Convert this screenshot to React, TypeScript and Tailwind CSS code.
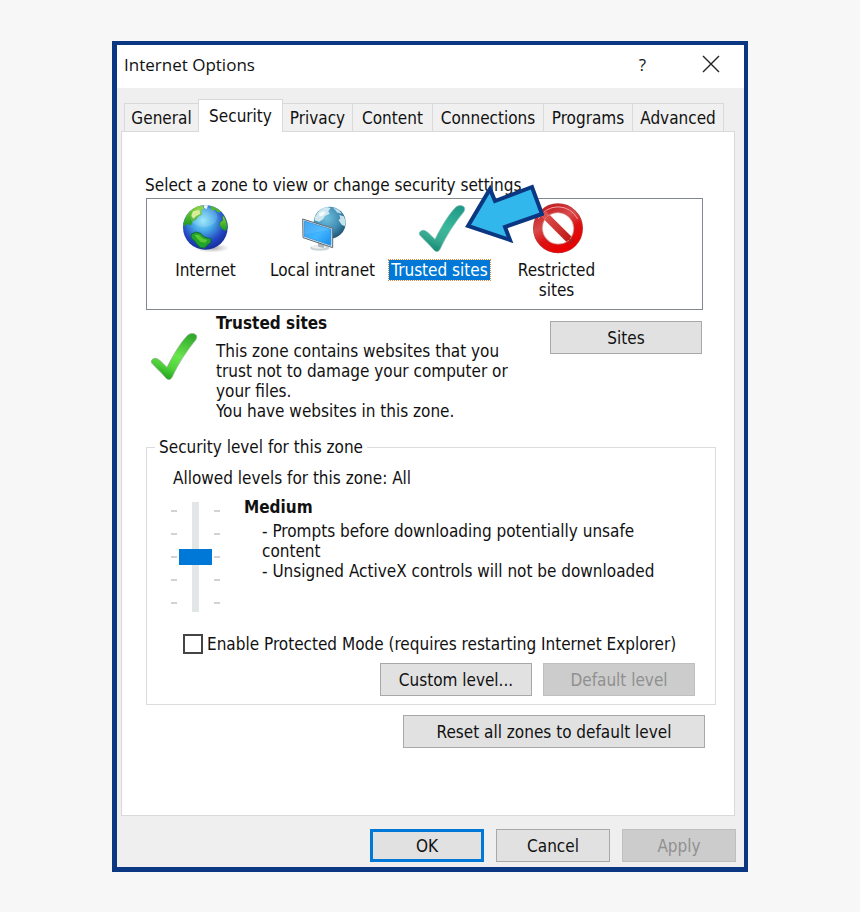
import type { ReactNode } from "react";
import { clsx } from "clsx";

// Tab widths include the shared border between neighbours.
const tabs = [
  { name: "General", width: "w-[75px]" },
  { name: "Security", width: "w-[85px]" },
  { name: "Privacy", width: "w-[71px]" },
  { name: "Content", width: "w-[81px]" },
  { name: "Connections", width: "w-[112px]" },
  { name: "Programs", width: "w-[90px]" },
  { name: "Advanced", width: "w-[92px]" },
];

function GlobeIcon() {
  return (
    <svg viewBox="0 0 144 144" className="size-12 overflow-visible" aria-hidden="true">
      <defs>
        <radialGradient id="sea" cx="0.45" cy="0.35" r="0.68">
          <stop offset="0" stopColor="#8fe6fb" />
          <stop offset="0.35" stopColor="#47a9e6" />
          <stop offset="0.72" stopColor="#2346c2" />
          <stop offset="1" stopColor="#142a94" />
        </radialGradient>
        <radialGradient id="globeShadow">
          <stop offset="0" stopColor="#777" stopOpacity="0.7" />
          <stop offset="1" stopColor="#999" stopOpacity="0" />
        </radialGradient>
        <linearGradient id="land" x1="0" y1="0" x2="0" y2="1">
          <stop offset="0" stopColor="#8fd63a" />
          <stop offset="1" stopColor="#159627" />
        </linearGradient>
      </defs>
      <ellipse cx="90" cy="132" rx="52" ry="14" fill="url(#globeShadow)" />
      <circle cx="70" cy="70" r="67" fill="url(#sea)" />
      <path d="M6 50 Q16 22 42 9 L62 4 L65 15 L57 21 L61 31 L49 38 L41 48 L32 52 L27 64 L16 60 L7 68 Q2 60 6 50Z" fill="url(#land)" />
      <path d="M33 22 L52 17 L55 29 L43 36 L34 44 L28 35Z" fill="#d3e98a" />
      <path d="M65 4 L78 4 L74 15 L67 12Z" fill="#f3fbf6" />
      <path d="M84 6 Q103 9 119 24 L107 25 L101 17 L91 20Z" fill="#52b82b" />
      <path d="M121 34 L128 40 Q137 55 136 72 L130 81 L120 75 L112 65 L114 53 L122 50Z" fill="url(#land)" stroke="#286a62" strokeWidth="2" />
      <path d="M27 91 L41 84 L56 88 L67 99 L87 105 L86 116 L75 124 L68 132 L55 131 L45 121 L37 110 L28 103Z" fill="#20a42c" stroke="#16693c" strokeWidth="3" />
      <path d="M37 92 L50 92 L61 103 L76 108 L70 116 L56 114 L46 104Z" fill="#5ac832" />
      <ellipse cx="66" cy="39" rx="40" ry="30" fill="#fff" opacity="0.14" />
    </svg>
  );
}

function IntranetIcon() {
  return (
    <svg viewBox="0 0 144 144" className="size-12 overflow-visible" aria-hidden="true">
      <defs>
        <radialGradient id="intranetSea" cx="0.4" cy="0.35" r="0.7">
          <stop offset="0" stopColor="#71c1dd" />
          <stop offset="0.6" stopColor="#418cb4" />
          <stop offset="1" stopColor="#1d526f" />
        </radialGradient>
        <linearGradient id="screen" x1="0" y1="0" x2="1" y2="1">
          <stop offset="0" stopColor="#2e9bef" />
          <stop offset="0.55" stopColor="#41b5ff" />
          <stop offset="1" stopColor="#178bea" />
        </linearGradient>
      </defs>
      <circle cx="92" cy="56" r="48" fill="url(#intranetSea)" />
      <path d="M48 39 Q59 16 82 9 L95 12 L88 22 L92 29 L78 36 L72 46 L61 53 L46 49Z" fill="#cfe8ef" />
      <path d="M60 28 L74 22 L80 27 L70 36 L61 37Z" fill="#f5fbfc" />
      <path d="M101 10 L120 18 L128 29 L115 26 L109 19Z" fill="#b9dce7" />
      <path d="M121 33 L134 37 Q143 54 137 67 L128 62 L119 49 L124 43Z" fill="#c4e5ed" />
      <ellipse cx="62" cy="132" rx="29" ry="8" fill="#cbd1d4" />
      <ellipse cx="60" cy="129" rx="22" ry="5" fill="#edf0f1" />
      <path d="M55 111 L77 120 L74 132 L58 128Z" fill="#afb7bb" />
      <path d="M11 45 L101 73 L101 131 L12 101Z" fill="#dde4e8" stroke="#5d6d76" strokeWidth="3" />
      <path d="M16 51 L96 76 L95 124 L16 97Z" fill="url(#screen)" stroke="#1783d6" strokeWidth="2" />
      <path d="M16 51 L96 76 L16 92Z" fill="#fff" opacity="0.1" />
    </svg>
  );
}

function CheckIcon({ tone }: { tone: "teal" | "green" }) {
  const teal = tone === "teal";
  const id = `check-${tone}`;
  return (
    <svg
      viewBox={teal ? "-9 -3 144 144" : "-3 0 144 144"}
      className="size-12 shrink-0 overflow-visible"
      aria-hidden="true"
    >
      <defs>
        <linearGradient id={id} x1="0.8" y1="0" x2="0.4" y2="1">
          <stop offset="0" stopColor={teal ? "#219987" : "#31a82b"} />
          <stop offset="0.5" stopColor={teal ? "#3bb89c" : "#68e64c"} />
          <stop offset="0.78" stopColor={teal ? "#37aa91" : "#50d13b"} />
          <stop offset="1" stopColor={teal ? "#178a75" : "#24a51e"} />
        </linearGradient>
      </defs>
      <path
        d="M2 90 C-2 82 6 75 15 76 C25 78 35 91 48 103 C66 68 86 32 110 7 C118 0 130 0 136 7 C139 13 136 19 131 25 C106 55 82 92 64 131 C59 141 51 142 45 135 C31 118 14 104 2 90Z"
        fill={`url(#${id})`}
        stroke={teal ? "#85bcb2" : "#92ac8e"}
        strokeWidth="2"
      />
    </svg>
  );
}

function RestrictedIcon() {
  return (
    <svg viewBox="0 0 144 144" className="size-12 overflow-visible" aria-hidden="true">
      <defs>
        <linearGradient id="ban" x1="0.2" y1="0" x2="0.7" y2="1">
          <stop offset="0" stopColor="#c52025" />
          <stop offset="0.35" stopColor="#d94a4b" />
          <stop offset="0.65" stopColor="#dc1111" />
          <stop offset="1" stopColor="#ea0000" />
        </linearGradient>
        <linearGradient id="banBar" x1="0" y1="0" x2="1" y2="1">
          <stop offset="0" stopColor="#dc5552" />
          <stop offset="1" stopColor="#bd1212" />
        </linearGradient>
      </defs>
      <circle cx="75" cy="73" r="61" fill="none" stroke="#b73d3d" strokeWidth="28" />
      <circle cx="75" cy="73" r="61" fill="none" stroke="url(#ban)" strokeWidth="24" />
      <path d="M32 30 L118 116" stroke="url(#banBar)" strokeWidth="22" />
      <path d="M42 37 A49 49 0 0 1 111 106 M108 109 A49 49 0 0 1 39 40" fill="none" stroke="#e99b97" strokeWidth="2" />
      <path d="M16 45 A66 66 0 0 1 134 45" fill="none" stroke="#efa19d" strokeWidth="3" />
    </svg>
  );
}

function PushButton({
  children,
  className,
  disabled,
  primary,
}: {
  children: ReactNode;
  className: string;
  disabled?: boolean;
  primary?: boolean;
}) {
  return (
    <button
      type="button"
      disabled={disabled}
      className={clsx(
        "shrink-0",
        className,
        disabled
          ? "border border-[#bfbfbf] bg-[#cccccc] text-[#909090]"
          : primary
            ? "border-[3px] border-[#0078d7] bg-[#e1e1e1]"
            : "border border-[#a8a8a8] bg-[#e1e1e1]",
      )}
    >
      {children}
    </button>
  );
}

function Zone({ label, icon, selected }: { label: string; icon: ReactNode; selected?: boolean }) {
  return (
    <button type="button" aria-pressed={!!selected} className="flex w-[117px] flex-col items-center">
      {icon}
      <span
        className={clsx(
          "mt-2 px-0.5",
          label === "Restricted sites" && "w-24",
          selected && "bg-[#0078d7] text-white outline-1 outline-dotted outline-[#e08a3c]",
        )}
      >
        {label}
      </span>
    </button>
  );
}

function Ticks() {
  return (
    <div className="flex h-[94px] flex-col justify-between" aria-hidden="true">
      {[0, 1, 2, 3, 4].map((tick) => (
        <span key={tick} className="h-0.5 w-1.5 bg-[#d2d2d2]" />
      ))}
    </div>
  );
}

export default function App() {
  return (
    <div className="min-h-screen bg-[#f7f7f7] px-28 py-[41px] font-['DejaVu_Sans_Condensed','DejaVu_Sans',sans-serif] text-[17px] leading-5 text-[#111]">
      <main className="border-4 border-b-[5px] border-l-[5px] border-[#0b3782] bg-[#efefef]">
        <header className="flex h-[43px] items-center bg-white pr-6 pl-[7px] font-['Open_Sans','Noto_Sans',sans-serif] leading-5">
          <h1 className="flex-1 pb-1">Internet Options</h1>
          <button type="button" aria-label="Help" className="mr-14 pb-1">
            ?
          </button>
          <button type="button" aria-label="Close" className="pb-1.5">
            <svg viewBox="0 0 18 18" className="size-[18px]" fill="none" stroke="#222" strokeWidth="1.4">
              <path d="M1 1 L17 17 M17 1 L1 17" />
            </svg>
          </button>
        </header>

        <div className="pt-[11px] pr-[9px] pl-1">
          <div role="tablist" className="flex items-end pl-[3px]">
            {tabs.map((tab) => {
              const active = tab.name === "Security";
              return (
                <button
                  key={tab.name}
                  type="button"
                  role="tab"
                  aria-selected={active}
                  className={clsx(
                    "-mr-px shrink-0 border border-b-0 border-[#d9d9d9] whitespace-nowrap",
                    tab.width,
                    active ? "relative -mb-px h-[33px] bg-white" : "h-7 bg-[#f0f0f0]",
                  )}
                >
                  {tab.name}
                </button>
              );
            })}
          </div>

          <section className="border border-[#d9d9d9] bg-white pt-[43px] pr-[18px] pb-[67px] pl-[17px]">
            <p className="pl-1.5">Select a zone to view or change security settings.</p>

            <div className="relative mt-[3px] mr-[13px] ml-[7px] flex h-28 items-start border border-[#828790] pt-[5px]">
              <Zone label="Internet" icon={<GlobeIcon />} />
              <Zone label="Local intranet" icon={<IntranetIcon />} />
              <Zone label="Trusted sites" icon={<CheckIcon tone="teal" />} selected />
              <Zone label="Restricted sites" icon={<RestrictedIcon />} />
              {/* Callout arrow pointing at the selected zone */}
              <svg
                viewBox="0 0 80 62"
                className="absolute -top-[17px] left-[317px] h-[62px] w-20"
                aria-hidden="true"
              >
                <path
                  d="M4 44 L26 7 L31 19 L68 5 L78 32 L41 45 L46 58Z"
                  fill="#31b7eb"
                  stroke="#0b3782"
                  strokeWidth="4"
                />
              </svg>
            </div>

            <div className="mt-[3px] flex items-start pr-3.5 pl-[11px]">
              <div className="pt-5">
                <CheckIcon tone="green" />
              </div>
              <div className="ml-[18px] flex-1">
                <h2 className="font-bold">Trusted sites</h2>
                <p className="mt-2 max-w-[300px]">
                  This zone contains websites that you trust not to damage your computer or your files.
                </p>
                <p>You have websites in this zone.</p>
              </div>
              <PushButton className="mt-2 h-[33px] w-[152px]">Sites</PushButton>
            </div>

            <fieldset className="mt-4 ml-[7px] border border-[#dcdcdc] pr-5 pb-2 pl-6">
              <legend className="-ml-4 px-1">Security level for this zone</legend>
              <p className="mt-[11px] ml-0.5">Allowed levels for this zone: All</p>

              <div className="mt-3.5 flex items-start">
                <div className="flex items-center gap-0.5">
                  <Ticks />
                  <input
                    type="range"
                    min={0}
                    max={4}
                    defaultValue={2}
                    aria-label="Security level"
                    className="h-[110px] w-[33px] appearance-none bg-transparent bg-[linear-gradient(#e3e6e6,#e3e6e6)] bg-[length:7px_110px] bg-center bg-no-repeat [writing-mode:vertical-lr] [&::-webkit-slider-thumb]:h-4 [&::-webkit-slider-thumb]:w-[33px] [&::-webkit-slider-thumb]:appearance-none [&::-webkit-slider-thumb]:bg-[#0078d7]"
                  />
                  <Ticks />
                </div>
                <div className="-mt-[5px] ml-6">
                  <h3 className="font-bold">Medium</h3>
                  <div className="mt-1 ml-[18px] max-w-[400px]">
                    <p>- Prompts before downloading potentially unsafe content</p>
                    <p>- Unsigned ActiveX controls will not be downloaded</p>
                  </div>
                </div>
              </div>

              <label className="mt-[22px] ml-3 flex items-center gap-1 whitespace-nowrap">
                <input type="checkbox" className="size-5 appearance-none border-2 border-[#444] bg-white" />
                Enable Protected Mode (requires restarting Internet Explorer)
              </label>

              <div className="mt-[9px] flex justify-end gap-[11px]">
                <PushButton className="h-[33px] w-[152px]">Custom level...</PushButton>
                <PushButton className="h-[33px] w-[152px]" disabled>
                  Default level
                </PushButton>
              </div>
            </fieldset>

            <div className="mt-2.5 flex justify-end pr-[11px]">
              <PushButton className="h-[33px] w-[302px]">Reset all zones to default level</PushButton>
            </div>
          </section>
        </div>

        <footer className="flex justify-end gap-3 pt-[13px] pr-2 pb-[5px]">
          <PushButton className="h-[33px] w-[114px]" primary>
            OK
          </PushButton>
          <PushButton className="h-[33px] w-[114px]">Cancel</PushButton>
          <PushButton className="h-[33px] w-[114px]" disabled>
            Apply
          </PushButton>
        </footer>
      </main>
    </div>
  );
}
